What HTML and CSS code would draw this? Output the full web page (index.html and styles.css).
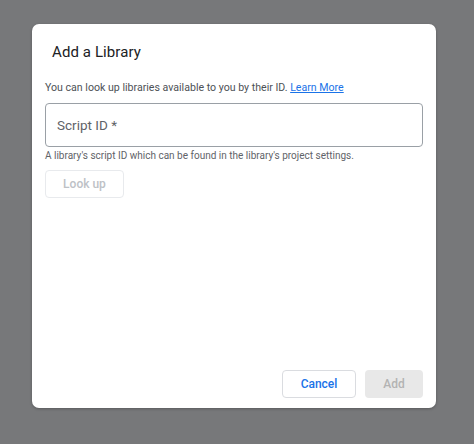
FILE: index.html
```html
<!DOCTYPE html>
<html>
<head>
<meta charset="utf-8">
<link rel="stylesheet" href="styles.css">
</head>
<body>
<div class="dialog">
  <h1 class="title">Add a Library</h1>
  <p class="desc">You can look up libraries available to you by their ID. <a href="#" class="link">Learn More</a></p>
  <div class="field"><span class="placeholder">Script ID *</span></div>
  <p class="hint">A library's script ID which can be found in the library's project settings.</p>
  <div class="lookup-row"><button class="btn-lookup">Look up</button></div>
  <div class="actions">
    <button class="btn-cancel">Cancel</button>
    <button class="btn-add">Add</button>
  </div>
</div>
</body>
</html>
```
FILE: styles.css
```css
html, body {
  margin: 0;
  height: 100%;
}
body {
  background: #77787a;
  padding: 24px 38px 36px 32px;
  box-sizing: border-box;
  font-family: Roboto, "Liberation Sans", sans-serif;
}
.dialog {
  background: #fff;
  border-radius: 7px;
  height: 384px;
  box-sizing: border-box;
  padding: 0 13px 10px 13px;
  display: flex;
  flex-direction: column;
  box-shadow: 0 1px 3px rgba(0,0,0,0.25);
}
.title {
  margin: 18px 0 0 7px;
  font-size: 15px;
  line-height: 20px;
  font-weight: 400;
  color: #202124;
  letter-spacing: 0.1px;
}
.desc {
  margin: 18px 0 0 0;
  font-size: 10.6px;
  line-height: 16px;
  color: #4d5156;
}
.link {
  color: #1a73e8;
  text-decoration: underline;
}
.field {
  margin-top: 7px;
  height: 44px;
  box-sizing: border-box;
  border: 1px solid #9aa0a6;
  border-radius: 4px;
  display: flex;
  align-items: center;
  padding-left: 11px;
}
.placeholder {
  font-size: 13.5px;
  color: #5f6368;
}
.hint {
  margin: 2px 0 0 0;
  font-size: 10px;
  line-height: 14px;
  color: #5f6368;
}
.lookup-row {
  margin-top: 7px;
  display: flex;
}
.btn-lookup {
  width: 79px;
  height: 28px;
  border: 1px solid #e8eaed;
  border-radius: 4px;
  background: #fff;
  color: #bdc1c6;
  font-family: Roboto, "Liberation Sans", sans-serif;
  font-size: 12px;
  font-weight: 500;
  padding: 0;
}
.actions {
  margin-top: auto;
  display: flex;
  justify-content: flex-end;
  gap: 9px;
}
.btn-cancel, .btn-add {
  height: 28px;
  border-radius: 4px;
  font-family: Roboto, "Liberation Sans", sans-serif;
  font-size: 12px;
  font-weight: 500;
  padding: 0;
}
.btn-cancel {
  width: 74px;
  border: 1px solid #dadce0;
  background: #fff;
  color: #1a73e8;
}
.btn-add {
  width: 58px;
  border: none;
  background: #e8e8e8;
  color: #b3b3b3;
}
```
